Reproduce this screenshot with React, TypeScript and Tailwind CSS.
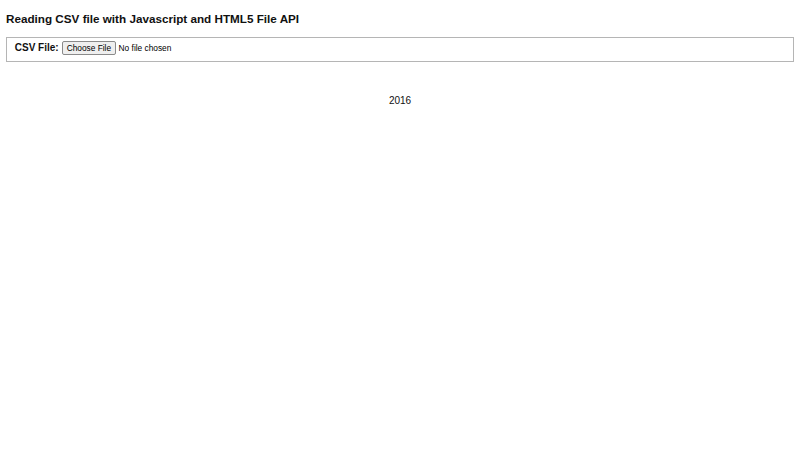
export default function App() {
  return (
    <div className="min-h-[450px] bg-white px-[5px] pt-[11.7px] font-['Liberation_Sans',Arial,sans-serif] text-black">
      <h3 className="pl-px text-[11.7px] leading-[13.45px] font-bold text-[#111]">
        Reading CSV file with Javascript and HTML5 File API
      </h3>

      <fieldset className="mx-[1.25px] mt-[11.7px] border-[1.5px] border-[#b5b5b5] px-[7.5px] pt-[3.3px] pb-[6px]">
        <div className="flex items-center">
          <label className="text-[10px] leading-[12px] font-bold text-[#111]">CSV File:</label>
          <button className="ml-[3px] rounded-[2px] border border-[#8a8a8a] bg-[#efefef] px-[4px] py-[0.5px] text-[8.33px] leading-[11px]">
            Choose File
          </button>
          <span className="ml-[2.5px] text-[8.33px] leading-[11px]">No file chosen</span>
        </div>
      </fieldset>

      <p className="mt-[33px] text-center text-[10px] leading-[11.5px] text-[#111]">2016</p>
    </div>
  );
}
